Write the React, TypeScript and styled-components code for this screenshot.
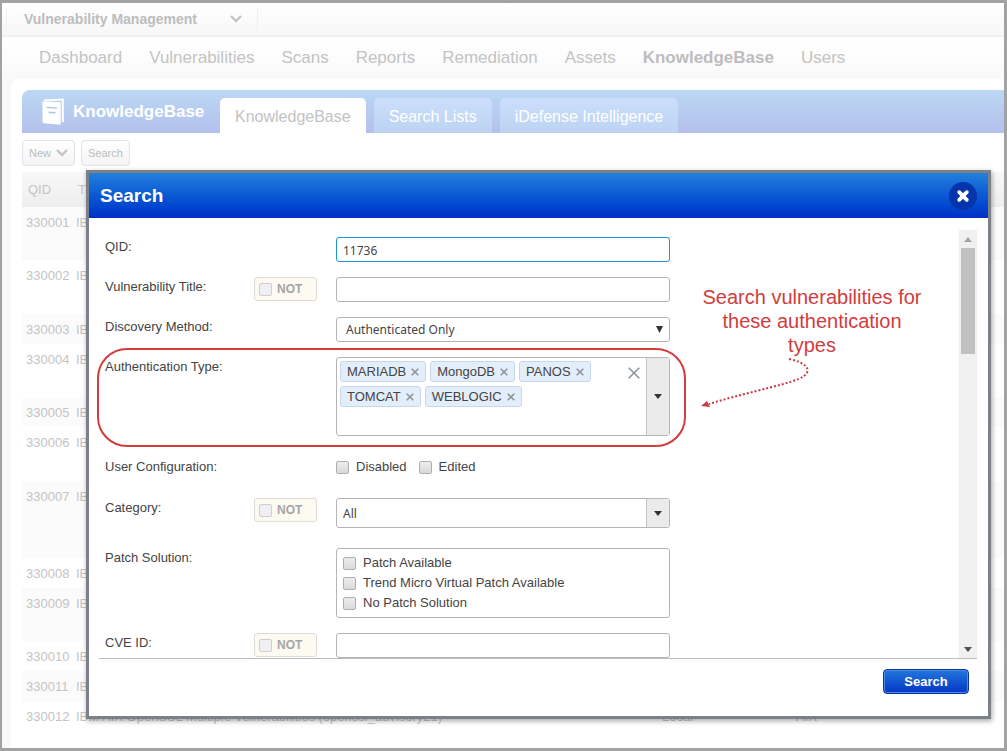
import React from "react";
import styled, { createGlobalStyle, css } from "styled-components";

const GlobalStyle = createGlobalStyle`
  * { box-sizing: border-box; }
  html, body, #root { height: 100%; }
  body {
    margin: 0;
    background: #fff;
    color: #444;
    font: 13px "Liberation Sans", Arial, sans-serif;
  }
  button, input, select { font: inherit; color: inherit; margin: 0; }
  button { cursor: pointer; padding: 0; }
`;

const Frame = styled.div`
  position: relative;
  display: flex;
  flex-direction: column;
  min-height: 100%;
  border: 3px solid #a2a2a2;
  border-left-width: 2px;
  background: linear-gradient(#fff 40px, #f8f8f8 80px);
`;

const TopBar = styled.header`
  display: flex;
  align-items: center;
  height: 34px;
  padding-left: 4px;
  border-bottom: 2px solid #f1f1f1;
  background: linear-gradient(#fff, #f7f7f7);
`;

const ModulePicker = styled.button`
  display: flex;
  align-items: center;
  justify-content: space-between;
  width: 252px;
  height: 22px;
  padding: 0 15px 0 17px;
  border: solid #f0f0f0;
  border-width: 0 1px;
  background: none;
  color: #bdbdbd;
  font-size: 14px;
  font-weight: bold;
`;

const MainNav = styled.nav`
  display: flex;
  gap: 27px;
  height: 42px;
  padding-left: 37px;
  line-height: 42px;
`;

const NavLink = styled.a<{ $active?: boolean }>`
  color: ${(p) => (p.$active ? "#bdbdbd" : "#c3c3c3")};
  font-size: 17px;
  font-weight: ${(p) => (p.$active ? "bold" : "normal")};
  text-decoration: none;
`;

const Panel = styled.main`
  flex: 1;
  margin-left: 9px;
  padding: 11px 0 0 11px;
  border-top-left-radius: 8px;
  background: #fff;
`;

const SectionBar = styled.div`
  display: flex;
  align-items: flex-end;
  gap: 8px;
  height: 43px;
  border-top-left-radius: 8px;
  background: linear-gradient(#bbd8f4, #b4c0ec);
`;

const SectionTitle = styled.h1`
  display: flex;
  align-items: center;
  gap: 8px;
  width: 190px;
  height: 43px;
  margin: 0;
  padding-left: 19px;
  color: #fff;
  font-size: 17px;
`;

const Tab = styled.a<{ $active?: boolean }>`
  height: 35px;
  padding: 0 15px;
  border-radius: 5px 5px 0 0;
  background: ${(p) => (p.$active ? "#fff" : "linear-gradient(#cbdffb, #bdd3f3)")};
  color: ${(p) => (p.$active ? "#c3c3c3" : "#fff")};
  font-size: 16px;
  line-height: 37px;
  text-decoration: none;
`;

const Toolbar = styled.div`
  display: flex;
  gap: 6px;
  padding: 7px 0 6px;
`;

const ToolButton = styled.button`
  display: flex;
  align-items: center;
  gap: 5px;
  height: 26px;
  padding: 0 6px;
  border: 1px solid #e2e2e8;
  border-radius: 4px;
  background: linear-gradient(#fff, #f4f4f4);
  color: #bcbcbc;
  font-size: 11px;
`;

const ResultTable = styled.table`
  width: 100%;
  border-collapse: collapse;
  table-layout: fixed;
  color: #c4c4c4;
  text-align: left;
  th, td { padding: 0 0 0 4px; font-weight: normal; white-space: nowrap; overflow: hidden; }
  th { height: 35px; padding-left: 6px; background: linear-gradient(#f8f8f8, #eee); }
  th:nth-child(1) { width: 50px; }
  th:nth-child(2) { width: 586px; }
  th:nth-child(3) { width: 134px; }
`;

const ResultRow = styled.tr<{ $height: number }>`
  &:nth-child(odd) { background: #fbfbfb; }
  td {
    height: ${(p) => p.$height}px;
    padding-top: 2px;
    line-height: 28px;
    vertical-align: top;
  }
`;

const Dialog = styled.section`
  position: absolute;
  top: 167px;
  left: 84px;
  right: 13px;
  border: 3px solid #7c8087;
  background: #fff;
  box-shadow: 1px 2px 5px rgba(0, 0, 0, 0.35);
`;

const DialogHeader = styled.header`
  display: flex;
  align-items: center;
  justify-content: space-between;
  height: 45px;
  padding: 0 11px;
  background: linear-gradient(#2380dc, #0045cf 75%, #002fc6);
`;

const DialogTitle = styled.h2`
  margin: 0;
  color: #fff;
  font-size: 19px;
`;

const CloseButton = styled.button`
  display: grid;
  place-items: center;
  width: 28px;
  height: 28px;
  border: 0;
  border-radius: 50%;
  background: #0634ad;
`;

const DialogBody = styled.div`
  display: flex;
  height: 440px;
  padding: 0 11px 0 16px;
  overflow: hidden;
`;

const Form = styled.form`
  display: flex;
  flex: none;
  flex-direction: column;
  gap: 15px;
  padding-top: 19px;
`;

const FormRow = styled.div<{ $height?: number; $center?: boolean; $marked?: boolean }>`
  position: relative;
  display: grid;
  grid-template-columns: 149px 82px 334px;
  align-items: ${(p) => (p.$center ? "center" : "start")};
  min-height: ${(p) => p.$height ?? 25}px;
  ${(p) =>
    p.$marked &&
    css`
      &::before {
        content: "";
        position: absolute;
        inset: -9px -16px -11px -8px;
        border: 2px solid #d23c3c;
        border-radius: 30px;
        pointer-events: none;
      }
    `}
`;

const Label = styled.label`
  grid-column: 1;
  line-height: 20px;
`;

const Field = styled.div`
  grid-column: 3;
  position: relative;
`;

const boxed = css`
  width: 100%;
  border: 1px solid #b5b5b5;
  border-radius: 3px;
  background: #fff;
`;

const TextInput = styled.input`
  ${boxed}
  display: block;
  height: 25px;
  padding: 1px 6px 0;
  font: 12px "Noto Sans", Tahoma, sans-serif;
  outline: 0;
  &[data-active="true"] { border-color: #1f96d2; }
`;

const Select = styled.select<{ $split?: boolean }>`
  ${boxed}
  display: block;
  appearance: none;
  height: ${(p) => (p.$split ? 30 : 25)}px;
  padding: 0 ${(p) => (p.$split ? "30px 0 6px" : "20px 0 9px")};
  font: 12px "Noto Sans", Tahoma, sans-serif;
`;

const Caret = styled.span<{ $split?: boolean }>`
  position: absolute;
  inset: 1px 1px 1px auto;
  display: grid;
  place-items: center;
  width: ${(p) => (p.$split ? 23 : 19)}px;
  border-left: ${(p) => (p.$split ? "1px solid #c4c4c4" : "0")};
  border-radius: 0 2px 2px 0;
  background: ${(p) => (p.$split ? "#ebebeb" : "none")};
  pointer-events: none;
`;

const TagBox = styled.div`
  ${boxed}
  display: flex;
  height: 79px;
`;

const Tags = styled.div`
  display: flex;
  flex: 1;
  flex-wrap: wrap;
  align-content: flex-start;
  gap: 4px;
  padding: 3px 0 0 3px;
`;

const Tag = styled.span`
  display: flex;
  align-items: center;
  gap: 5px;
  height: 21px;
  padding: 0 6px;
  border: 1px solid #c9d8e8;
  border-radius: 3px;
  background: #e3eefb;
`;

const IconButton = styled.button`
  display: grid;
  place-items: center;
  border: 0;
  background: none;
`;

const ClearButton = styled(IconButton)`
  width: 25px;
  height: 29px;
`;

const DropButton = styled(IconButton)`
  width: 23px;
  border-left: 1px solid #c4c4c4;
  background: #ebebeb;
`;

const Check = styled.input`
  appearance: none;
  flex: none;
  width: 13px;
  height: 13px;
  border: 1px solid #aeaeae;
  border-radius: 2px;
  background: linear-gradient(#ededed, #dadada);
`;

const CheckLabel = styled.label`
  display: flex;
  align-items: center;
  gap: 7px;
  line-height: 20px;
`;

const NotLabel = styled.label`
  grid-column: 2;
  display: flex;
  align-items: center;
  gap: 5px;
  width: 63px;
  height: 24px;
  padding-left: 4px;
  border: 1px solid #e0dcd4;
  border-radius: 3px;
  background: #fdfaf1;
  color: #a5a5a5;
  font-size: 12px;
  font-weight: bold;
  ${Check} { border-color: #cfcfcf; background: #f0f0f2; }
`;

const InlineChecks = styled.div`
  display: flex;
  gap: 12px;
`;

const CheckGroup = styled.div`
  ${boxed}
  display: flex;
  flex-direction: column;
  height: 70px;
  padding: 4px 6px;
`;

const Note = styled.aside`
  flex: 1;
  margin-left: 22px;
  padding-top: 67px;
`;

const NoteText = styled.p`
  width: 240px;
  margin: 0;
  padding: 0 8px;
  color: #d23c3c;
  font-size: 20px;
  line-height: 24px;
  text-align: center;
`;

const Scrollbar = styled.div`
  display: flex;
  flex-direction: column;
  align-items: center;
  width: 18px;
  margin-top: 12px;
  background: #f0f0f0;
`;

const Thumb = styled.div`
  width: 14px;
  height: 106px;
  margin-bottom: auto;
  background: #c1c1c1;
`;

const ScrollButton = styled(IconButton)`
  width: 18px;
  height: 18px;
`;

const DialogFooter = styled.footer`
  display: flex;
  justify-content: flex-end;
  margin: 0 11px 0 10px;
  padding: 10px 8px 22px;
  border-top: 1px solid #bbb;
`;

const SubmitButton = styled.button`
  width: 86px;
  height: 25px;
  border: 1px solid #0a3596;
  border-radius: 4px;
  background: linear-gradient(#2277dc, #0336c4);
  box-shadow: inset 0 0 0 1px #4d8be6;
  color: #fff;
  font-weight: bold;
`;

const Chevron = () => (
  <svg width="12" height="8" viewBox="0 0 12 8" fill="none" stroke="#c3c3c3" strokeWidth="2.4">
    <path d="M1 1l5 5 5-5" />
  </svg>
);

const Triangle = ({ w = 8, h = 5, color = "#333", up = false }) => (
  <svg width={w} height={h} viewBox="0 0 8 5" preserveAspectRatio="none" fill={color}>
    <path d={up ? "M0 5h8L4 0z" : "M0 0h8L4 5z"} />
  </svg>
);

const Cross = ({ size = 8, color = "#8e959c", weight = 1.6 }) => (
  <svg
    width={size}
    height={size}
    viewBox={`0 0 ${size} ${size}`}
    stroke={color}
    strokeWidth={weight}
  >
    <path d={`M.7 .7L${size - 0.7} ${size - 0.7}M${size - 0.7} .7L.7 ${size - 0.7}`} />
  </svg>
);

const CloseIcon = () => (
  <svg width="14" height="14" viewBox="0 0 14 14" stroke="#fff" strokeWidth="3.8" strokeLinecap="round">
    <path d="M3.2 3.2l7.6 7.6M10.8 3.2l-7.6 7.6" />
  </svg>
);

const BookIcon = () => (
  <svg width="24" height="28" viewBox="0 0 24 28">
    <path d="M3 2.4l18.8-.8v22.6" fill="none" stroke="#fff" strokeWidth="2" />
    <path d="M1.5 3.5l18.2.8v22.4L3 25.2c-1-.1-1.5-.8-1.5-1.8z" fill="#fff" />
    <path d="M5.5 9.4l10.5.7M7.5 14.2l7 .5" stroke="#a9c0ea" strokeWidth="1.4" />
  </svg>
);

const navItems = ["Dashboard", "Vulnerabilities", "Scans", "Reports", "Remediation", "Assets", "KnowledgeBase", "Users"];

const results = [
  { qid: 330001, height: 53 },
  { qid: 330002, height: 54 },
  { qid: 330003, height: 30 },
  { qid: 330004, height: 53 },
  { qid: 330005, height: 30 },
  { qid: 330006, height: 54 },
  { qid: 330007, height: 77 },
  { qid: 330008, height: 30 },
  { qid: 330009, height: 53 },
  { qid: 330010, height: 30 },
  { qid: 330011, height: 30 },
  {
    qid: 330012,
    height: 30,
    title: "IBM AIX OpenSSL Multiple Vulnerabilities (openssl_advisory21)",
    category: "Local",
    vendor: "AIX",
  },
];

const authTypes = ["MARIADB", "MongoDB", "PANOS", "TOMCAT", "WEBLOGIC"];
const patchOptions = ["Patch Available", "Trend Micro Virtual Patch Available", "No Patch Solution"];

const Not = () => (
  <NotLabel>
    <Check type="checkbox" />
    NOT
  </NotLabel>
);

const CheckOption = ({ text }: { text: string }) => (
  <CheckLabel>
    <Check type="checkbox" />
    {text}
  </CheckLabel>
);

export default function App() {
  return (
    <>
      <GlobalStyle />
      <Frame>
        <TopBar>
          <ModulePicker>
            Vulnerability Management <Chevron />
          </ModulePicker>
        </TopBar>
        <MainNav>
          {navItems.map((item) => (
            <NavLink key={item} href="#" $active={item === "KnowledgeBase"}>
              {item}
            </NavLink>
          ))}
        </MainNav>
        <Panel>
          <SectionBar>
            <SectionTitle>
              <BookIcon />
              KnowledgeBase
            </SectionTitle>
            <Tab href="#" $active>KnowledgeBase</Tab>
            <Tab href="#">Search Lists</Tab>
            <Tab href="#">iDefense Intelligence</Tab>
          </SectionBar>
          <Toolbar>
            <ToolButton>
              New <Chevron />
            </ToolButton>
            <ToolButton>Search</ToolButton>
          </Toolbar>
          <ResultTable>
            <thead>
              <tr>
                <th>QID</th>
                <th>Title</th>
                <th />
                <th />
              </tr>
            </thead>
            <tbody>
              {results.map((r) => (
                <ResultRow key={r.qid} $height={r.height}>
                  <td>{r.qid}</td>
                  <td>{r.title ?? "IBM"}</td>
                  <td>{r.category}</td>
                  <td>{r.vendor}</td>
                </ResultRow>
              ))}
            </tbody>
          </ResultTable>
        </Panel>

        <Dialog role="dialog" aria-labelledby="dialog-title">
          <DialogHeader>
            <DialogTitle id="dialog-title">Search</DialogTitle>
            <CloseButton aria-label="Close">
              <CloseIcon />
            </CloseButton>
          </DialogHeader>
          <DialogBody>
            <Form id="search-form">
              <FormRow>
                <Label htmlFor="qid">QID:</Label>
                <Field>
                  <TextInput id="qid" defaultValue="11736" data-active="true" />
                </Field>
              </FormRow>
              <FormRow>
                <Label htmlFor="title">Vulnerability Title:</Label>
                <Not />
                <Field>
                  <TextInput id="title" />
                </Field>
              </FormRow>
              <FormRow>
                <Label htmlFor="method">Discovery Method:</Label>
                <Field>
                  <Select id="method">
                    <option>Authenticated Only</option>
                  </Select>
                  <Caret>
                    <Triangle w={7} h={7} />
                  </Caret>
                </Field>
              </FormRow>
              <FormRow $height={79} $marked>
                <Label as="span" id="auth-label">Authentication Type:</Label>
                <Field>
                  <TagBox role="group" aria-labelledby="auth-label">
                    <Tags>
                      {authTypes.map((type) => (
                        <Tag key={type}>
                          {type}
                          <IconButton type="button" aria-label={`Remove ${type}`}>
                            <Cross />
                          </IconButton>
                        </Tag>
                      ))}
                    </Tags>
                    <ClearButton type="button" aria-label="Clear all">
                      <Cross size={12} />
                    </ClearButton>
                    <DropButton type="button" aria-label="Show types">
                      <Triangle />
                    </DropButton>
                  </TagBox>
                </Field>
              </FormRow>
              <FormRow $height={32} $center>
                <Label as="span">User Configuration:</Label>
                <Field>
                  <InlineChecks>
                    <CheckOption text="Disabled" />
                    <CheckOption text="Edited" />
                  </InlineChecks>
                </Field>
              </FormRow>
              <FormRow $height={35}>
                <Label htmlFor="category">Category:</Label>
                <Not />
                <Field>
                  <Select id="category" $split>
                    <option>All</option>
                  </Select>
                  <Caret $split>
                    <Triangle />
                  </Caret>
                </Field>
              </FormRow>
              <FormRow>
                <Label as="span">Patch Solution:</Label>
                <Field>
                  <CheckGroup>
                    {patchOptions.map((text) => (
                      <CheckOption key={text} text={text} />
                    ))}
                  </CheckGroup>
                </Field>
              </FormRow>
              <FormRow>
                <Label htmlFor="cve">CVE ID:</Label>
                <Not />
                <Field>
                  <TextInput id="cve" />
                </Field>
              </FormRow>
            </Form>
            <Note>
              <NoteText>Search vulnerabilities for these authentication types</NoteText>
              <svg width="240" height="56" viewBox="0 0 240 56" fill="none" stroke="#c93a45">
                <path d="M97 2C112 5 121 12 112 19C101 27 62 33 17 47" strokeWidth="2" strokeDasharray="2 2" />
                <path d="M9 49l6-5 3 6z" fill="#c93a45" stroke="none" />
              </svg>
            </Note>
            <Scrollbar>
              <ScrollButton aria-label="Scroll up">
                <Triangle up color="#a3a3a3" />
              </ScrollButton>
              <Thumb />
              <ScrollButton aria-label="Scroll down">
                <Triangle color="#505050" />
              </ScrollButton>
            </Scrollbar>
          </DialogBody>
          <DialogFooter>
            <SubmitButton type="submit" form="search-form">Search</SubmitButton>
          </DialogFooter>
        </Dialog>
      </Frame>
    </>
  );
}
